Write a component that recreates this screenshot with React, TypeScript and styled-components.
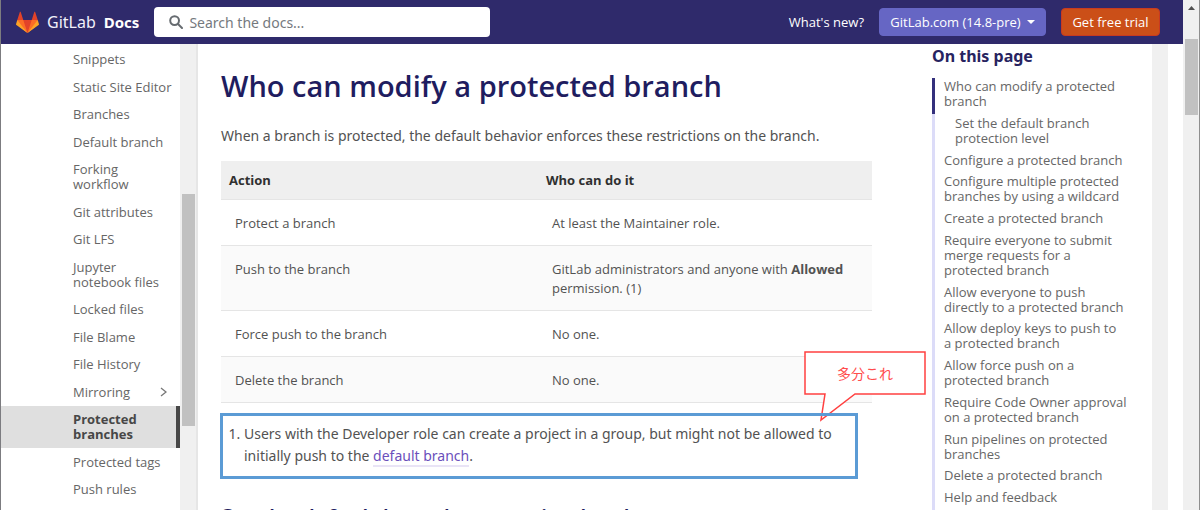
import React from "react";
import styled, { createGlobalStyle } from "styled-components";

const labelFont = `"Open Sans", "Noto Sans", sans-serif`;

const GlobalStyle = createGlobalStyle`
  *, *::before, *::after { box-sizing: border-box; }
  body {
    margin: 0;
    background: #fff;
    color: #525252;
    font-family: "Noto Sans", "Open Sans", "Noto Sans CJK JP", sans-serif;
    font-size: 14px;
  }
  a { color: inherit; text-decoration: none; }
  button, input { font-family: inherit; }
`;

const Window = styled.div`
  display: flex;
  height: 100vh;
  overflow: hidden;
  border-left: 1px solid #7c7c80;
  border-right: 1px solid #8f8f8f;
`;

const Page = styled.div`
  flex: 1;
  min-width: 0;
  display: flex;
  flex-direction: column;
`;

const Header = styled.header`
  flex: none;
  height: 44px;
  display: flex;
  align-items: center;
  padding: 0 23px 0 15px;
  background: #2f2a6b;
  color: #fff;
`;

const Brand = styled.a`
  display: flex;
  align-items: center;
  gap: 8px;
  margin-right: 15px;
  font-size: 16px;
  color: #f1f0fa;
`;

const BrandDocs = styled.strong`
  font-size: 15px;
  color: #fff;
`;

const SearchBox = styled.label`
  display: flex;
  align-items: center;
  gap: 6px;
  width: 336px;
  height: 30px;
  padding: 0 15px;
  border-radius: 4px;
  background: #fff;
`;

const SearchInput = styled.input`
  flex: 1;
  min-width: 0;
  border: 0;
  padding: 0;
  outline: 0;
  background: transparent;
  font-size: 14px;
  color: #525252;
  &::placeholder { color: #75797e; opacity: 1; }
`;

const HeaderActions = styled.div`
  margin-left: auto;
  display: flex;
  align-items: center;
  gap: 15px;
  font-family: ${labelFont};
  font-size: 13px;
  font-weight: 500;
`;

const HeaderButton = styled.button<{ $tone: "version" | "trial" }>`
  display: flex;
  align-items: center;
  justify-content: center;
  gap: 6px;
  width: ${(p) => (p.$tone === "version" ? 167 : 99)}px;
  height: 28px;
  padding: 0;
  border: 1px solid ${(p) => (p.$tone === "version" ? "#6666c4" : "#c93a20")};
  border-radius: 4px;
  background: ${(p) => (p.$tone === "version" ? "#6666c4" : "#cb4f18")};
  color: #fff;
  font-size: 13px;
  font-weight: 500;
`;

const Columns = styled.div`
  flex: 1;
  min-height: 0;
  display: flex;
`;

const Sidebar = styled.div`
  flex: none;
  width: 197px;
  display: flex;
  border-right: 2px solid #e6e6e6;
`;

const SideNav = styled.nav`
  flex: 1;
  min-width: 0;
  display: flex;
  flex-direction: column;
  justify-content: space-between;
  padding: 2px 0 7px;
`;

const SideLink = styled.a<{ $active?: boolean }>`
  display: flex;
  align-items: center;
  justify-content: space-between;
  padding: 6px 4px 6px 72px;
  border-right: 4px solid ${(p) => (p.$active ? "#474747" : "transparent")};
  background: ${(p) => (p.$active ? "#dfdfdf" : "transparent")};
  background-clip: padding-box;
  color: ${(p) => (p.$active ? "#474747" : "#666")};
  font-family: ${labelFont};
  font-size: 13px;
  font-weight: ${(p) => (p.$active ? 700 : 400)};
  line-height: 15px;
  white-space: pre;
`;

const Chevron = styled.svg`
  margin-right: 5px;
`;

const Track = styled.div`
  flex: none;
  width: 16px;
  display: flex;
  flex-direction: column;
  align-items: center;
  background: #f0f0f0;
`;

const Thumb = styled.div<{ $start: number; $length: number }>`
  width: 13px;
  margin-top: ${(p) => p.$start}px;
  height: ${(p) => p.$length}px;
  background: #c1c1c1;
`;

const ScrollArrow = styled.svg`
  display: block;
  margin-top: 5px;
`;

const Main = styled.main`
  flex: 1;
  min-width: 0;
  overflow: hidden;
  padding: 22px 60px 0 23px;
`;

const Title = styled.h2`
  margin: 0;
  color: #1f1d60;
  font-family: ${labelFont};
  font-size: 29px;
  font-weight: 600;
  line-height: 40px;
`;

const Subtitle = styled.h3`
  margin: 21px 0 0;
  color: #1f1d60;
  font-family: ${labelFont};
  font-size: 22px;
  font-weight: 600;
  line-height: 32px;
  white-space: nowrap;
`;

const Intro = styled.p`
  margin: 19px 0 14px;
  line-height: 22px;
`;

const RoleTable = styled.table`
  width: 100%;
  table-layout: fixed;
  border-collapse: collapse;
  font-family: ${labelFont};
  font-size: 13px;
  line-height: 19px;
  text-align: left;
  tbody tr:nth-child(even) { background: #fafafa; }
`;

const HeadCell = styled.th<{ $width?: number }>`
  width: ${(p) => (p.$width ? `${p.$width}px` : "auto")};
  padding: 10px 8px 9px;
  border-bottom: 1px solid #e5e5e5;
  background: #efefef;
  color: #303030;
  font-weight: 700;
`;

const Cell = styled.td`
  padding: 14px 14px 12px;
  border-bottom: 1px solid #e5e5e5;
  vertical-align: top;
  white-space: pre-line;
`;

const NoteArea = styled.div`
  position: relative;
  isolation: isolate;
  margin: 10px 14px 0 -1px;
`;

const Notes = styled.ol`
  margin: 0;
  padding: 7px 0 9px 21px;
  border: 3px solid #5b9bd5;
  line-height: 22px;
`;

const TextLink = styled.a`
  color: #6b4fbb;
  border-bottom: 2px solid #e9e4f6;
`;

const Callout = styled.div`
  position: absolute;
  z-index: -1;
  right: -68px;
  top: -62px;
  width: 122px;
  height: 71px;
  color: #ff4d4d;
  font-family: "Noto Sans CJK JP", sans-serif;
  font-size: 14px;
  line-height: 44px;
  text-align: center;
`;

const CalloutShape = styled.svg`
  position: absolute;
  inset: 0;
  z-index: -1;
`;

const Toc = styled.aside`
  flex: none;
  width: 251px;
  display: flex;
  justify-content: space-between;
  padding-right: 15px;
`;

const TocBody = styled.div`
  width: 196px;
  display: flex;
  flex-direction: column;
`;

const TocTitle = styled.h2`
  margin: 0 0 9px;
  color: #272360;
  font-size: 16px;
  font-weight: 700;
  line-height: 25px;
`;

const TocList = styled.nav`
  flex: 1;
  min-height: 0;
  display: flex;
  flex-direction: column;
  justify-content: space-between;
  box-shadow: inset 3px 0 #dcdcf8;
`;

const TocLink = styled.a<{ $active?: boolean; $nested?: boolean }>`
  padding: 1px 0 5px ${(p) => (p.$nested ? 23 : 12)}px;
  box-shadow: ${(p) => (p.$active ? "inset 3px 0 #34307c" : "none")};
  color: #666;
  font-family: ${labelFont};
  font-size: 13px;
  line-height: 15px;
  white-space: pre;
`;

const sideItems = [
  "Snippets",
  "Static Site Editor",
  "Branches",
  "Default branch",
  "Forking\nworkflow",
  "Git attributes",
  "Git LFS",
  "Jupyter\nnotebook files",
  "Locked files",
  "File Blame",
  "File History",
  "Mirroring",
  "Protected\nbranches",
  "Protected tags",
  "Push rules",
];

const tocItems = [
  "Who can modify a protected\nbranch",
  "Set the default branch\nprotection level",
  "Configure a protected branch",
  "Configure multiple protected\nbranches by using a wildcard",
  "Create a protected branch",
  "Require everyone to submit\nmerge requests for a\nprotected branch",
  "Allow everyone to push\ndirectly to a protected branch",
  "Allow deploy keys to push to\na protected branch",
  "Allow force push on a\nprotected branch",
  "Require Code Owner approval\non a protected branch",
  "Run pipelines on protected\nbranches",
  "Delete a protected branch",
  "Help and feedback",
];

const Logo = () => (
  <svg width="23" height="23" viewBox="0 0 36 36" aria-hidden="true">
    <path fill="#e24329" d="M2 14l9.38 9v-9l-4-12.28c-.205-.632-1.176-.632-1.38 0z" />
    <path fill="#e24329" d="M34 14l-9.38 9v-9l4-12.28c.205-.632 1.176-.632 1.38 0z" />
    <path fill="#e24329" d="M18 34.38L3 14h30z" />
    <path fill="#fc6d26" d="M18 34.38L11.38 14H2l4 11z" />
    <path fill="#fc6d26" d="M18 34.38L24.62 14H34l-4 11z" />
    <path fill="#fca326" d="M2 14L.1 20.16c-.18.565 0 1.2.5 1.56L18 34.38z" />
    <path fill="#fca326" d="M34 14l1.9 6.16c.18.565 0 1.2-.5 1.56L18 34.38z" />
  </svg>
);

export default function App() {
  return (
    <>
      <GlobalStyle />
      <Window>
        <Page>
          <Header>
            <Brand href="#">
              <Logo />
              <span>GitLab</span>
              <BrandDocs>Docs</BrandDocs>
            </Brand>
            <SearchBox>
              <svg width="14" height="14" viewBox="0 0 14 14" fill="none" stroke="#666b70" strokeWidth="2" aria-hidden="true">
                <circle cx="5.6" cy="5.6" r="4.4" />
                <path d="M9 9l4 4" strokeLinecap="round" />
              </svg>
              <SearchInput type="search" placeholder="Search the docs..." aria-label="Search the docs" />
            </SearchBox>
            <HeaderActions>
              <a href="#">What's new?</a>
              <HeaderButton $tone="version" aria-haspopup="true">
                GitLab.com (14.8-pre)
                <svg width="8" height="4" viewBox="0 0 8 4" aria-hidden="true">
                  <path d="M0 0h8L4 4z" fill="#fff" />
                </svg>
              </HeaderButton>
              <HeaderButton $tone="trial">Get free trial</HeaderButton>
            </HeaderActions>
          </Header>
          <Columns>
            <Sidebar>
              <SideNav>
                {sideItems.map((item) => (
                  <SideLink key={item} href="#" $active={item.startsWith("Protected\n")}>
                    {item}
                    {item === "Mirroring" && (
                      <Chevron width="7" height="10" viewBox="0 0 7 10" fill="none" stroke="#777" aria-hidden="true">
                        <path d="M1 1l5 4-5 4" strokeWidth="1.3" />
                      </Chevron>
                    )}
                  </SideLink>
                ))}
              </SideNav>
              <Track>
                <Thumb $start={150} $length={232} />
              </Track>
            </Sidebar>
            <Main>
              <Title>Who can modify a protected branch</Title>
              <Intro>
                When a branch is protected, the default behavior enforces these restrictions on the branch.
              </Intro>
              <RoleTable>
                <thead>
                  <tr>
                    <HeadCell $width={317}>Action</HeadCell>
                    <HeadCell>Who can do it</HeadCell>
                  </tr>
                </thead>
                <tbody>
                  <tr>
                    <Cell>Protect a branch</Cell>
                    <Cell>At least the Maintainer role.</Cell>
                  </tr>
                  <tr>
                    <Cell>Push to the branch</Cell>
                    <Cell>
                      GitLab administrators and anyone with <strong>Allowed</strong>
                      {"\npermission. (1)"}
                    </Cell>
                  </tr>
                  <tr>
                    <Cell>Force push to the branch</Cell>
                    <Cell>No one.</Cell>
                  </tr>
                  <tr>
                    <Cell>Delete the branch</Cell>
                    <Cell>No one.</Cell>
                  </tr>
                </tbody>
              </RoleTable>
              <NoteArea>
                <Callout>
                  <CalloutShape width="122" height="71" viewBox="0 0 122 71" aria-hidden="true">
                    <path
                      d="M1 1h120v42H51L17 69l4-26H1z"
                      fill="#fff"
                      stroke="#ff4040"
                      strokeWidth="1.5"
                    />
                  </CalloutShape>
                  多分これ
                </Callout>
                <Notes>
                  <li>
                    Users with the Developer role can create a project in a group, but might not be allowed to
                    initially push to the <TextLink href="#">default branch</TextLink>.
                  </li>
                </Notes>
              </NoteArea>
              <Subtitle>Set the default branch protection level</Subtitle>
            </Main>
            <Toc>
              <TocBody>
                <TocTitle>On this page</TocTitle>
                <TocList>
                  {tocItems.map((item, i) => (
                    <TocLink key={item} href="#" $active={i === 0} $nested={i === 1}>
                      {item}
                    </TocLink>
                  ))}
                </TocList>
              </TocBody>
              <Track />
            </Toc>
          </Columns>
        </Page>
        <Track>
          <ScrollArrow width="7" height="5" viewBox="0 0 7 5" aria-hidden="true">
            <path d="M0 5h7L3.500 1z" fill="#505050" />
          </ScrollArrow>
          <Thumb $start={29} $length={76} />
        </Track>
      </Window>
    </>
  );
}
